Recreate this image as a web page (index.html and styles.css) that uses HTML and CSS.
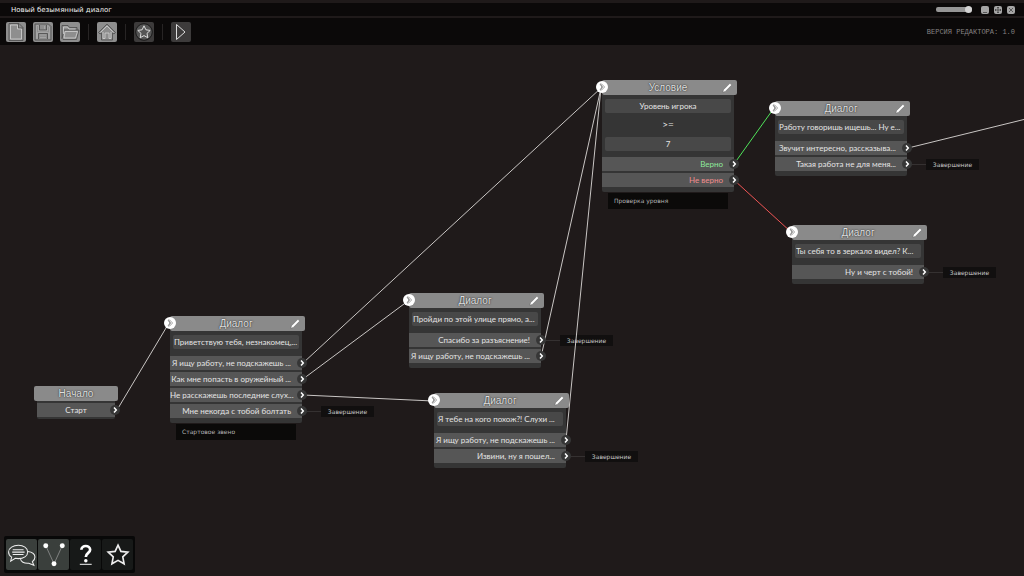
FILE: index.html
```html
<!DOCTYPE html>
<html lang="ru">
  <head>
    <meta charset="utf-8">
    <title>Новый безымянный диалог</title>
    <link rel="stylesheet" href="styles.css">
  </head>
  <body>
    <!-- shared icons -->
    <svg class="symbols" aria-hidden="true">
      <symbol id="out" viewBox="0 0 10 10">
        <path d="M4 2.5 L6.3 5 L4 7.5" fill="none" stroke="#fff" stroke-width="1.5"/>
      </symbol>
      <symbol id="in" viewBox="0 0 12 12">
        <path d="M4 3 L5.6 3 L8.6 6 L5.6 9 L4 9 L5.8 6 Z M5 4 L6.8 6 L5 8" fill="none" stroke="#777" stroke-width=".7"/>
      </symbol>
      <symbol id="pencil" viewBox="0 0 10 10">
        <path d="M.7 9.3 L1.4 7 L7.2 1.2 L8.8 2.8 L3 8.6 Z" fill="#fff" stroke="#555" stroke-width=".4"/>
      </symbol>
    </svg>

    <header class="titlebar">
      <h1>Новый безымянный диалог</h1>
      <input class="zoom" type="range" min="0" max="100" value="100" aria-label="Масштаб">
      <button class="win-btn" aria-label="Свернуть"><svg viewBox="0 0 8 8"><path d="M2 6.5H6"/></svg></button>
      <button class="win-btn" aria-label="Развернуть"><svg viewBox="0 0 8 8"><path d="M4 1V7M1 4H7M3 2L4 1L5 2M3 6L4 7L5 6M2 3L1 4L2 5M6 3L7 4L6 5"/></svg></button>
      <button class="win-btn" aria-label="Закрыть"><svg viewBox="0 0 8 8"><path d="M2 2L6 6M6 2L2 6"/></svg></button>
    </header>

    <nav class="toolbar">
      <button class="tool" aria-label="Новый">
        <svg viewBox="0 0 20 20"><path class="edge" d="M3 1.500H13L17 5.500V18.500H3Z M12.500 2V6H17"/><path d="M4.500 3H11.500V7H15.500V17H4.500Z"/></svg>
      </button>
      <button class="tool" aria-label="Сохранить">
        <svg viewBox="0 0 20 20"><path class="edge" d="M2 2H15.500L18 4.500V18H2Z"/><path class="edge" d="M6.500 3V8H13.500V3 M5.500 17V11.500H14.500V17"/><path class="faint" d="M3.500 3.500H5.500V9H14.500V3.500L16.500 5V16.500H15.500V10.500H4.500V16.500H3.500Z M11.500 4V7 M7 15.500H13M7 13H13"/></svg>
      </button>
      <button class="tool" aria-label="Открыть">
        <svg viewBox="0 0 20 20"><path class="edge" d="M2 16.500V3.500H8L9.500 5.500H17V8 M2 16.500L4 8H19L16.500 17.500H3Z"/><path d="M3.500 12V5H7.500L9 7H15.500 M5 9.500H17.500L15.500 16H4Z"/></svg>
      </button>
      <span class="sep"></span>
      <button class="tool" aria-label="Домой">
        <svg viewBox="0 0 20 20"><path class="edge" d="M1.500 10.500L10 2L18.500 10.500L17 12L15.500 11V18H4.500V11L3 12Z"/><path d="M3.500 10.500L10 4L16.500 10.500 M6 10V16.500H8V11H12V16.500H14V10"/></svg>
      </button>
      <span class="sep"></span>
      <button class="tool dark" aria-label="Избранное">
        <svg viewBox="0 0 20 20"><circle cx="10" cy="10" r="8.300" class="ring"/><path d="M10 3.800L11.900 7.800L16.200 8.400L13 11.400L13.800 15.700L10 13.600L6.200 15.700L7 11.400L3.800 8.400L8.100 7.800Z"/></svg>
      </button>
      <span class="sep"></span>
      <button class="tool dark" aria-label="Запуск">
        <svg viewBox="0 0 20 20"><path d="M5.500 2.500L14 10L5.500 17.500Z"/></svg>
      </button>
      <span class="version">ВЕРСИЯ РЕДАКТОРА: 1.0</span>
    </nav>

    <main class="canvas">
      <section class="node start">
        <header class="node-head"><h2>Начало</h2></header>
        <div class="node-body">
          <div class="row">Старт<button class="port" aria-label="Выход"><svg><use href="#out"/></svg></button></div>
        </div>
      </section>

      <section class="node greeting">
        <header class="node-head">
          <button class="port-in" aria-label="Вход"><svg><use href="#in"/></svg></button>
          <h2>Диалог</h2>
          <button class="edit" aria-label="Изменить"><svg><use href="#pencil"/></svg></button>
        </header>
        <div class="node-body">
          <input class="field" type="text" aria-label="Реплика" value="Приветствую тебя, незнакомец,...">
          <div class="row">Я ищу работу, не подскажешь ...<button class="port" aria-label="Выход"><svg><use href="#out"/></svg></button></div>
          <div class="row">Как мне попасть в оружейный ...<button class="port" aria-label="Выход"><svg><use href="#out"/></svg></button></div>
          <div class="row">Не расскажешь последние слух...<button class="port" aria-label="Выход"><svg><use href="#out"/></svg></button></div>
          <div class="row">Мне некогда с тобой болтать<button class="port" aria-label="Выход"><svg><use href="#out"/></svg></button><span class="finish">Завершение</span></div>
        </div>
        <p class="note">Стартовое звено</p>
      </section>

      <section class="node street">
        <header class="node-head">
          <button class="port-in" aria-label="Вход"><svg><use href="#in"/></svg></button>
          <h2>Диалог</h2>
          <button class="edit" aria-label="Изменить"><svg><use href="#pencil"/></svg></button>
        </header>
        <div class="node-body">
          <input class="field" type="text" aria-label="Реплика" value="Пройди по этой улице прямо, а...">
          <div class="row">Спасибо за разъяснение!<button class="port" aria-label="Выход"><svg><use href="#out"/></svg></button><span class="finish">Завершение</span></div>
          <div class="row">Я ищу работу, не подскажешь ...<button class="port" aria-label="Выход"><svg><use href="#out"/></svg></button></div>
        </div>
      </section>

      <section class="node rumors">
        <header class="node-head">
          <button class="port-in" aria-label="Вход"><svg><use href="#in"/></svg></button>
          <h2>Диалог</h2>
          <button class="edit" aria-label="Изменить"><svg><use href="#pencil"/></svg></button>
        </header>
        <div class="node-body">
          <input class="field" type="text" aria-label="Реплика" value="Я тебе на кого похож?! Слухи ...">
          <div class="row">Я ищу работу, не подскажешь ...<button class="port" aria-label="Выход"><svg><use href="#out"/></svg></button></div>
          <div class="row">Извини, ну я пошел...<button class="port" aria-label="Выход"><svg><use href="#out"/></svg></button><span class="finish">Завершение</span></div>
        </div>
      </section>

      <section class="node condition">
        <header class="node-head">
          <button class="port-in" aria-label="Вход"><svg><use href="#in"/></svg></button>
          <h2>Условие</h2>
          <button class="edit" aria-label="Изменить"><svg><use href="#pencil"/></svg></button>
        </header>
        <div class="node-body">
          <input class="field" type="text" aria-label="Переменная" value="Уровень игрока">
          <button class="operator">&gt;=</button>
          <input class="field" type="text" aria-label="Значение" value="7">
          <div class="row yes">Верно<button class="port" aria-label="Выход"><svg><use href="#out"/></svg></button></div>
          <div class="row no">Не верно<button class="port" aria-label="Выход"><svg><use href="#out"/></svg></button></div>
        </div>
        <p class="note">Проверка уровня</p>
      </section>

      <section class="node job">
        <header class="node-head">
          <button class="port-in" aria-label="Вход"><svg><use href="#in"/></svg></button>
          <h2>Диалог</h2>
          <button class="edit" aria-label="Изменить"><svg><use href="#pencil"/></svg></button>
        </header>
        <div class="node-body">
          <input class="field" type="text" aria-label="Реплика" value="Работу говоришь ищешь... Ну е...">
          <div class="row">Звучит интересно, рассказыва...<button class="port" aria-label="Выход"><svg><use href="#out"/></svg></button></div>
          <div class="row">Такая работа не для меня...<button class="port" aria-label="Выход"><svg><use href="#out"/></svg></button><span class="finish">Завершение</span></div>
        </div>
      </section>

      <section class="node mirror">
        <header class="node-head">
          <button class="port-in" aria-label="Вход"><svg><use href="#in"/></svg></button>
          <h2>Диалог</h2>
          <button class="edit" aria-label="Изменить"><svg><use href="#pencil"/></svg></button>
        </header>
        <div class="node-body">
          <input class="field" type="text" aria-label="Реплика" value="Ты себя то в зеркало видел? К...">
          <div class="row">Ну и черт с тобой!<button class="port" aria-label="Выход"><svg><use href="#out"/></svg></button><span class="finish">Завершение</span></div>
        </div>
      </section>

      <!-- links between ports -->
      <svg class="links" aria-hidden="true">
        <path d="M117 365L169 278"/>
        <path d="M303 318L601 43"/>
        <path d="M303 334L408 256"/>
        <path d="M303 350L433 356"/>
        <path d="M541 312L601 43"/>
        <path d="M566 395L601 43"/>
        <path d="M908 103L1030 73"/>
        <path class="link-yes" d="M734 119L774 63"/>
        <path class="link-no" d="M734 135L791 187"/>
      </svg>

      <div class="modes">
        <button class="mode active" aria-label="Диалоги">
          <svg viewBox="0 0 30 30">
            <path d="M21 12C25.500 12.500 28 14.500 28 17.500C28 19.500 27 21 25.500 22L27 25.500L22 23.500C18 23.800 15 22.500 14 19.500"/>
            <path d="M12 6C17 6 21 8.800 21 12.500C21 16.500 17 19 12 19L9 18.700L4.500 21.500L5.500 17.500C3.500 16.300 2.500 14.500 2.500 12.500C2.500 8.800 7 6 12 6Z"/>
            <path d="M6.500 10.500H17M6 12.700H18M6.500 15H17"/>
          </svg>
        </button>
        <button class="mode active" aria-label="Связи">
          <svg viewBox="0 0 30 30">
            <path class="thin" d="M7.500 6.500L15.500 24L23.500 6.500"/>
            <circle cx="7.500" cy="6.500" r="2.400"/><circle cx="23.500" cy="6.500" r="2.400"/><circle cx="15.500" cy="24" r="2.400"/>
          </svg>
        </button>
        <button class="mode" aria-label="Справка">
          <svg viewBox="0 0 30 30">
            <path class="thick" d="M11 10.500C11 5.500 19.500 5.500 19.500 10.500C19.500 13.500 15.300 13.500 15.300 17.500"/>
            <circle cx="15.300" cy="21" r="1.700"/>
            <path d="M9.500 24.500H21"/>
          </svg>
        </button>
        <button class="mode" aria-label="Избранное">
          <svg viewBox="0 0 30 30">
            <path class="star" d="M15.500 6L18.300 12L25 12.800L20.100 17.300L21.400 24L15.500 20.700L9.600 24L10.900 17.300L6 12.800L12.700 12Z"/>
          </svg>
        </button>
      </div>
    </main>
  </body>
</html>
```

FILE: styles.css
```css
* {
  box-sizing: border-box;
}

body {
  margin: 0;
  padding-top: 3px;
  height: 100vh;
  display: flex;
  flex-direction: column;
  overflow: hidden;
  background: #1f1a1a;
  color: #e4e4e4;
  font-family: Lato, "Liberation Sans", sans-serif;
  font-size: 8px;
}

h1,
h2,
p {
  margin: 0;
  font-weight: normal;
}

button,
input {
  margin: 0;
  padding: 0;
  border: 0;
  background: none;
  color: inherit;
  font: inherit;
}

svg {
  display: block;
  width: 100%;
  height: 100%;
}

.symbols {
  position: absolute;
  width: 0;
  height: 0;
}

/* top bars */
.titlebar {
  display: flex;
  align-items: center;
  gap: 5px;
  height: 13px;
  margin-bottom: 2px;
  padding: 0 9px 0 11px;
  background: #0b0909;
}

.titlebar h1 {
  margin-right: auto;
  font-family: "DejaVu Sans", sans-serif;
  font-size: 7px;
  color: #f0f0f0;
}

.zoom {
  appearance: none;
  width: 36px;
  height: 7px;
  margin-right: 4px;
}

.zoom::-webkit-slider-runnable-track {
  height: 5px;
  border-radius: 2px;
  background: #969696;
}

.zoom::-webkit-slider-thumb {
  appearance: none;
  width: 7px;
  height: 7px;
  margin-top: -1px;
  border-radius: 50%;
  background: #d4d4d4;
}

.win-btn {
  width: 8px;
  height: 8px;
  border-radius: 2px;
  background: #a5a5a5;
}

.win-btn path {
  fill: none;
  stroke: #444;
  stroke-width: .8;
}

.toolbar {
  display: flex;
  align-items: center;
  gap: 7px;
  height: 27px;
  padding: 0 9px 0 6px;
  background: #0b0909;
}

.tool {
  width: 20px;
  height: 20px;
  border-radius: 2px;
  background: #8e8e8e;
}

.tool path {
  fill: none;
  stroke: #d2d2d2;
  stroke-width: .8;
}

.tool .edge,
.tool .ring {
  fill: none;
  stroke: #4b4b4b;
  stroke-width: .8;
}

.tool .faint {
  stroke: #b4b4b4;
  stroke-width: .6;
}

.dark {
  background: #3d3b3b;
}

.dark path {
  stroke: #dedede;
  stroke-width: 1;
}

.tool .ring {
  fill: #555;
  stroke: #191919;
  stroke-width: 1;
}

.sep {
  width: 1px;
  height: 16px;
  margin: 0 1px;
  background: #272424;
}

.version {
  margin-left: auto;
  font-family: "Liberation Mono", monospace;
  font-size: 7px;
  color: #858282;
}

/* node canvas */
.canvas {
  position: relative;
  flex: 1;
  overflow: hidden;
}

.node {
  position: absolute;
  width: 135px;
}

.start { left: 34px; top: 341px; width: 84px; }
.greeting { left: 170px; top: 271px; }
.street { left: 409px; top: 248px; }
.rumors { left: 434px; top: 348px; }
.condition { left: 602px; top: 35px; }
.job { left: 775px; top: 56px; }
.mirror { left: 792px; top: 180px; }

.node-head {
  position: relative;
  height: 15px;
  border-radius: 2px;
  background: #8a8a8a;
}

.node-head h2 {
  line-height: 15px;
  padding-right: 3px;
  text-align: center;
  font-family: "Liberation Sans", Arial, sans-serif;
  font-size: 10px;
  color: #dedede;
  text-shadow: 0 0 1px #333, 0 0 2px #444;
}

.start h2 {
  padding: 0;
}

.node-body {
  display: flex;
  flex-direction: column;
  gap: 2px;
  margin-right: 3px;
  padding: 4px 0 5px;
  border-radius: 0 0 2px 2px;
  background: #353535;
}

.start .node-body {
  margin: 0 3px;
  padding: 2px 0;
}

.field {
  height: 14px;
  margin: 0 3px 5px;
  padding: 0 1px;
  border-radius: 2px;
  background: #484848;
}

.condition .field {
  margin-bottom: 1px;
  text-align: center;
}

.condition .operator + .field {
  margin-bottom: 4px;
}

.operator {
  height: 16px;
  margin-bottom: 3px;
  font-size: 10px;
}

.row {
  position: relative;
  height: 14px;
  line-height: 14px;
  padding-right: 11px;
  background: #565656;
  text-align: right;
  white-space: nowrap;
}

.start .row {
  padding: 0;
  text-align: center;
}

.yes { color: #8de89b; }
.no { color: #f08c8c; }

.port {
  position: absolute;
  right: -5px;
  top: 2px;
  z-index: 2;
  width: 10px;
  height: 10px;
  border-radius: 50%;
  background: #363636;
}

.port-in {
  position: absolute;
  left: -6px;
  top: 1px;
  z-index: 2;
  width: 12px;
  height: 12px;
  border-radius: 50%;
  background: #fff;
}

.edit {
  position: absolute;
  right: 4px;
  top: 2px;
  width: 11px;
  height: 11px;
}

.finish {
  position: absolute;
  left: calc(100% + 19px);
  top: 2px;
  width: 53px;
  height: 11px;
  line-height: 11px;
  background: #110f0f;
  color: #c8c8c8;
  text-align: center;
  font-family: "DejaVu Sans", sans-serif;
  font-size: 6px;
}

.finish::before {
  content: "";
  position: absolute;
  right: 100%;
  top: 5px;
  width: 14px;
  height: 1px;
  background: #353131;
}

.note {
  width: 120px;
  height: 16px;
  margin: 1px 0 0 6px;
  padding-left: 6px;
  line-height: 16px;
  background: #0b0a09;
  color: #b4b4b4;
  font-family: "DejaVu Sans", sans-serif;
  font-size: 6px;
}

.links {
  position: absolute;
  left: 0;
  top: 0;
  z-index: 1;
  pointer-events: none;
}

.links path {
  fill: none;
  stroke: #c9c6c4;
  stroke-width: 1;
}

.links .link-yes { stroke: #4fe35a; }
.links .link-no { stroke: #ee5555; }

/* mode switcher over the canvas */
.modes {
  position: absolute;
  left: 4px;
  bottom: 3px;
  z-index: 3;
  display: flex;
  gap: 1px;
  padding: 3px 2px;
  border-radius: 2px;
  background: #080808;
}

.mode {
  width: 31px;
  height: 31px;
  border-radius: 2px;
  background: #171918;
}

.active {
  background: #3a3f3c;
}

.mode path {
  fill: none;
  stroke: #eee;
  stroke-width: 1;
}

.mode circle {
  fill: #fff;
}

.mode .thin {
  stroke: #aaa;
  stroke-width: .6;
}

.mode .thick {
  stroke: #fff;
  stroke-width: 2.6;
}

.mode .star {
  stroke-width: 1.6;
}
```
